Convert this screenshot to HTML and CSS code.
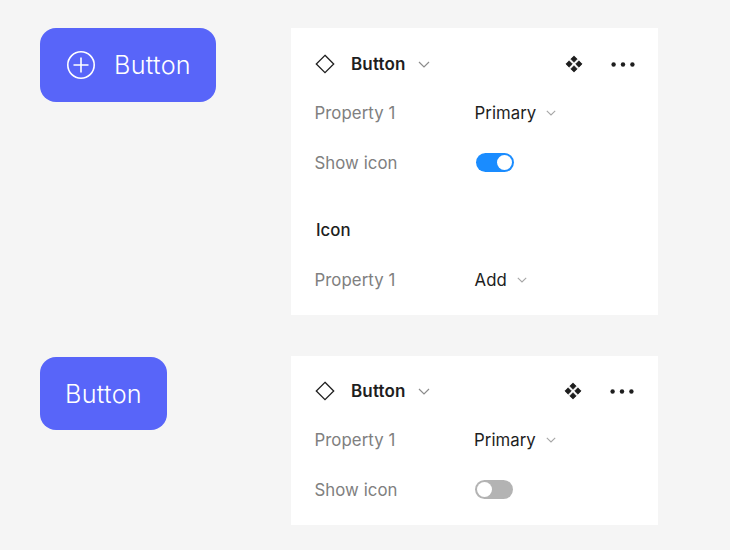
FILE: index.html
```html
<!DOCTYPE html>
<html lang="en">
<head>
<meta charset="utf-8">
<title>Button variants</title>
<link rel="stylesheet" href="styles.css">
</head>
<body>
<main class="page">
  <div class="btn-cell">
    <button class="btn btn-icon" type="button">
      <svg class="plus" width="30" height="30" viewBox="0 0 30 30" fill="none" stroke="#fff" stroke-width="1.6"><circle cx="15" cy="15" r="13.2"/><path d="M15 7.5v15M7.5 15h15"/></svg>
      <span>Button</span>
    </button>
  </div>
  <section class="panel panel-a">
    <div class="head">
      <svg class="diamond" width="20" height="20" viewBox="0 0 20 20" fill="none" stroke="#1e1e1e" stroke-width="1.3"><path d="M10 1.3 18.7 10 10 18.7 1.3 10Z"/></svg>
      <strong class="name">Button</strong>
      <svg class="chev chev-head" width="12" height="7" viewBox="0 0 12 7" fill="none" stroke="#8c8c8c" stroke-width="1.2"><path d="M1 1l5 5 5-5"/></svg>
      <svg class="comp" width="18" height="18" viewBox="0 0 18 18" fill="#1e1e1e" stroke="#1e1e1e" stroke-width=".7" stroke-linejoin="round"><path d="M9 .9 12.2 4.1 9 7.3 5.8 4.1ZM9 10.7 12.2 13.9 9 17.1 5.8 13.9ZM4.1 5.8 7.3 9 4.1 12.2 .9 9ZM13.9 5.8 17.1 9 13.9 12.2 10.7 9Z"/></svg>
      <svg class="dots" width="24" height="5" viewBox="0 0 24 5" fill="#1e1e1e"><circle cx="2.6" cy="2.5" r="2.2"/><circle cx="12" cy="2.5" r="2.2"/><circle cx="21.4" cy="2.5" r="2.2"/></svg>
    </div>
    <div class="row"><span class="label">Property 1</span><span class="value">Primary<svg class="chev" width="10" height="6" viewBox="0 0 10 6" fill="none" stroke="#a6a6a6" stroke-width="1.1"><path d="M.8.8 5 5 9.2.8"/></svg></span></div>
    <div class="row row-toggle"><span class="label">Show icon</span><span class="toggle on"></span></div>
    <h3 class="sub">Icon</h3>
    <div class="row"><span class="label">Property 1</span><span class="value">Add<svg class="chev" width="10" height="6" viewBox="0 0 10 6" fill="none" stroke="#a6a6a6" stroke-width="1.1"><path d="M.8.8 5 5 9.2.8"/></svg></span></div>
  </section>
  <div class="btn-cell">
    <button class="btn btn-plain" type="button"><span>Button</span></button>
  </div>
  <section class="panel panel-b">
    <div class="head">
      <svg class="diamond" width="20" height="20" viewBox="0 0 20 20" fill="none" stroke="#1e1e1e" stroke-width="1.3"><path d="M10 1.3 18.7 10 10 18.7 1.3 10Z"/></svg>
      <strong class="name">Button</strong>
      <svg class="chev chev-head" width="12" height="7" viewBox="0 0 12 7" fill="none" stroke="#8c8c8c" stroke-width="1.2"><path d="M1 1l5 5 5-5"/></svg>
      <svg class="comp" width="18" height="18" viewBox="0 0 18 18" fill="#1e1e1e" stroke="#1e1e1e" stroke-width=".7" stroke-linejoin="round"><path d="M9 .9 12.2 4.1 9 7.3 5.8 4.1ZM9 10.7 12.2 13.9 9 17.1 5.8 13.9ZM4.1 5.8 7.3 9 4.1 12.2 .9 9ZM13.9 5.8 17.1 9 13.9 12.2 10.7 9Z"/></svg>
      <svg class="dots" width="24" height="5" viewBox="0 0 24 5" fill="#1e1e1e"><circle cx="2.6" cy="2.5" r="2.2"/><circle cx="12" cy="2.5" r="2.2"/><circle cx="21.4" cy="2.5" r="2.2"/></svg>
    </div>
    <div class="row"><span class="label">Property 1</span><span class="value">Primary<svg class="chev" width="10" height="6" viewBox="0 0 10 6" fill="none" stroke="#a6a6a6" stroke-width="1.1"><path d="M.8.8 5 5 9.2.8"/></svg></span></div>
    <div class="row row-toggle"><span class="label">Show icon</span><span class="toggle"></span></div>
  </section>
</main>
</body>
</html>
```
FILE: styles.css
```css
* { box-sizing: border-box; }
html, body { margin: 0; height: 100%; }
body { background: #f5f5f5; font-family: Inter, "Liberation Sans", sans-serif; overflow: hidden; }
.page { display: grid; grid-template-columns: 251px 367px; grid-template-rows: 287px 210px; row-gap: 41px; padding: 28px 0 0 40px; }
.btn-cell { display: flex; align-items: flex-start; }
.btn { display: flex; align-items: center; border: 0; border-radius: 16px; background: #5865f9; color: #fff; font: 300 25.2px/1 Inter, sans-serif; letter-spacing: .3px; }
.btn span { padding-top: 2px; }
.btn-icon { width: 176px; height: 74px; padding: 0 0 0 26px; gap: 18px; }
.btn-plain { width: 127px; height: 73px; justify-content: center; margin-top: 1px; }
.plus { flex: none; }
.panel { background: #fff; padding: 0 23.5px 0 23.5px; }
.panel-a { height: 287px; padding-top: 26px; }
.panel-b { height: 169px; padding-top: 25px; padding-right: 24.5px; }
.head { display: flex; align-items: center; height: 20px; }
.diamond { margin-right: 16.5px; flex: none; }
.name { font-size: 17px; font-weight: 600; letter-spacing: .15px; color: #1e1e1e; }
.chev-head { margin-left: 12.5px; }
.comp { margin-left: auto; margin-right: 28px; }
.row { display: flex; align-items: center; height: 49px; font-size: 16.8px; letter-spacing: .05px; }
.row-toggle { height: 50px; padding-top: 1px; }
.head + .row { margin-top: 14px; }
.label { width: 160px; color: #808080; }
.panel-b .label { width: 159.5px; }
.value { display: flex; align-items: center; color: #1e1e1e; gap: 10px; }
.value .chev { margin-top: 1px; }
.toggle { display: block; position: relative; width: 38px; height: 19px; margin-left: 1px; border-radius: 10px; background: #b3b3b3; }
.toggle::after { content: ""; position: absolute; top: 2px; left: 2px; width: 15px; height: 15px; border-radius: 50%; background: #fff; }
.toggle.on { background: #1a8cff; }
.toggle.on::after { left: 21px; }
.sub { margin: 32px 0 0 1.5px; height: 23px; font-size: 16.8px; line-height: 23px; font-weight: 500; color: #1e1e1e; }
.sub + .row { margin-top: 13px; }
```
